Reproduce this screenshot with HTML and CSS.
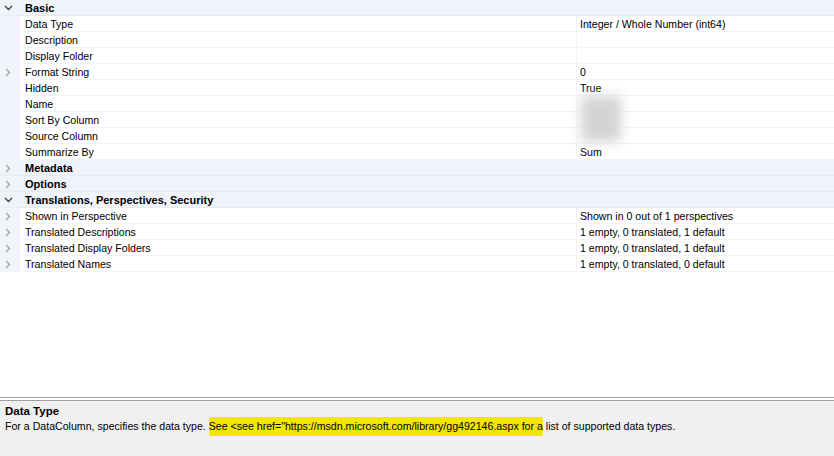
FILE: index.html
```html
<!DOCTYPE html>
<html lang="en">
<head>
    <meta charset="UTF-8">
    <title>Properties</title>
    <link rel="stylesheet" href="styles.css">
</head>
<body>
    <div class="grid">
        <div class="row cat">
            <span class="toggle"><svg width="9" height="6" viewBox="0 0 9 6"><path d="M1 1 L4.5 4.5 L8 1" class="open"/></svg></span>
            <span class="name">Basic</span>
        </div>
        <div class="row"><span class="toggle"></span><span class="name">Data Type</span><span class="value">Integer / Whole Number (int64)</span></div>
        <div class="row"><span class="toggle"></span><span class="name">Description</span><span class="value"></span></div>
        <div class="row"><span class="toggle"></span><span class="name">Display Folder</span><span class="value"></span></div>
        <div class="row"><span class="toggle"><svg width="6" height="9" viewBox="0 0 6 9"><path d="M1 1 L4.5 4.5 L1 8"/></svg></span><span class="name">Format String</span><span class="value">0</span></div>
        <div class="row"><span class="toggle"></span><span class="name">Hidden</span><span class="value">True</span></div>
        <div class="row"><span class="toggle"></span><span class="name">Name</span><span class="value"><span class="blur"></span></span></div>
        <div class="row"><span class="toggle"></span><span class="name">Sort By Column</span><span class="value"></span></div>
        <div class="row"><span class="toggle"></span><span class="name">Source Column</span><span class="value"></span></div>
        <div class="row"><span class="toggle"></span><span class="name">Summarize By</span><span class="value">Sum</span></div>
        <div class="row cat">
            <span class="toggle"><svg width="6" height="9" viewBox="0 0 6 9"><path d="M1 1 L4.5 4.5 L1 8"/></svg></span>
            <span class="name">Metadata</span>
        </div>
        <div class="row cat">
            <span class="toggle"><svg width="6" height="9" viewBox="0 0 6 9"><path d="M1 1 L4.5 4.5 L1 8"/></svg></span>
            <span class="name">Options</span>
        </div>
        <div class="row cat">
            <span class="toggle"><svg width="9" height="6" viewBox="0 0 9 6"><path d="M1 1 L4.5 4.5 L8 1" class="open"/></svg></span>
            <span class="name">Translations, Perspectives, Security</span>
        </div>
        <div class="row"><span class="toggle"><svg width="6" height="9" viewBox="0 0 6 9"><path d="M1 1 L4.5 4.5 L1 8"/></svg></span><span class="name">Shown in Perspective</span><span class="value">Shown in 0 out of 1 perspectives</span></div>
        <div class="row"><span class="toggle"><svg width="6" height="9" viewBox="0 0 6 9"><path d="M1 1 L4.5 4.5 L1 8"/></svg></span><span class="name">Translated Descriptions</span><span class="value">1 empty, 0 translated, 1 default</span></div>
        <div class="row"><span class="toggle"><svg width="6" height="9" viewBox="0 0 6 9"><path d="M1 1 L4.5 4.5 L1 8"/></svg></span><span class="name">Translated Display Folders</span><span class="value">1 empty, 0 translated, 1 default</span></div>
        <div class="row"><span class="toggle"><svg width="6" height="9" viewBox="0 0 6 9"><path d="M1 1 L4.5 4.5 L1 8"/></svg></span><span class="name">Translated Names</span><span class="value">1 empty, 0 translated, 0 default</span></div>
    </div>

    <div class="help">
        <div class="help-title">Data Type</div>
        <div class="help-text">For a DataColumn, specifies the data type. <span class="mark">See &lt;see href="https://msdn.microsoft.com/library/gg492146.aspx for a</span> list of supported data types.</div>
    </div>
</body>
</html>
```

FILE: styles.css
```css
body {
    margin: 0;
    width: 834px;
    height: 456px;
    display: flex;
    flex-direction: column;
    background-color: #ffffff;
    font-family: "Liberation Sans", Arial, sans-serif;
    font-size: 10.6px;
    color: #000000;
    overflow: hidden;
}

.grid {
    flex: 1;
}

.row {
    display: flex;
    height: 16px;
    box-sizing: border-box;
    border-bottom: 1px solid #f0f3f9;
    background-color: #ffffff;
    line-height: 17px;
}

.toggle {
    width: 20px;
    flex: none;
    background-color: #f0f3f9;
    display: flex;
    align-items: center;
    justify-content: center;
    padding-right: 4px;
    padding-top: 1px;
    box-sizing: border-box;
}

.toggle svg path {
    fill: none;
    stroke: #a8a8a8;
    stroke-width: 1.4;
}

.toggle svg path.open {
    stroke: #404040;
}

.name {
    width: 557px;
    flex: none;
    box-sizing: border-box;
    padding-left: 5px;
    border-right: 1px solid #f0f3f9;
    white-space: nowrap;
}

.value {
    flex: 1;
    padding-left: 3px;
    position: relative;
}

.cat {
    background-color: #f0f3f9;
    border-bottom-color: #e6eaf2;
}

.cat .name {
    font-weight: bold;
    font-size: 11px;
    border-right: none;
}

.blur {
    position: absolute;
    left: 4px;
    top: 0;
    width: 40px;
    height: 46px;
    background-color: #d4d4d4;
    filter: blur(6px);
    z-index: 1;
}

.help {
    height: 59px;
    flex: none;
    background-color: #f0f0f0;
    border-top: 1px solid #a0a0a0;
    box-shadow: inset 0 2px 0 #ffffff, inset 0 3px 0 #a0a0a0;
    padding: 6px 0 0 5px;
    box-sizing: border-box;
}

.help-title {
    font-weight: bold;
    font-size: 11.5px;
    line-height: 14px;
}

.help-text {
    line-height: 17px;
}

.mark {
    background-color: #f2e700;
    padding: 3px 0 4px 0;
    border-radius: 3px;
}
```
